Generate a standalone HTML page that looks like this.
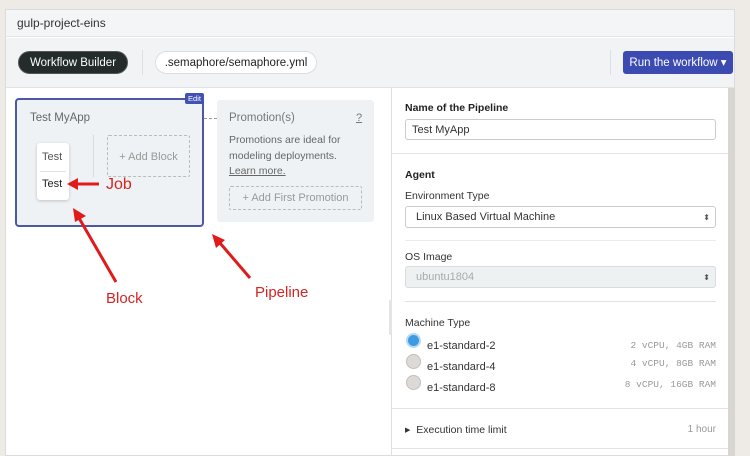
<!DOCTYPE html>
<html><head><style>
*{box-sizing:border-box;margin:0;padding:0}
body{width:750px;height:456px;background:#eeebe7;font-family:"Liberation Sans",sans-serif;position:relative;overflow:hidden;color:#333}
.a{position:absolute}
.t{position:absolute;white-space:nowrap}
</style></head><body>
<div class="a" style="left:5px;top:9px;width:730px;height:447px;background:#fff;border:1px solid #dcdcdc"></div>
<div class="a" style="left:6px;top:10px;width:728px;height:27px;background:#f3f5f6;border-bottom:1px solid #e2e5e7"></div>
<div class="t" style="left:17px;top:16px;font-size:12px;color:#333">gulp-project-eins</div>
<div class="a" style="left:6px;top:38px;width:728px;height:50px;background:#f1f3f4;border-bottom:1px solid #e0e3e5"></div>
<div class="a" style="left:18px;top:51px;width:110px;height:23px;background:#232b2d;border-radius:12px;border:1px solid #555;color:#fff;font-size:11.5px;text-align:center;line-height:22px">Workflow Builder</div>
<div class="a" style="left:142px;top:50px;width:1px;height:25px;background:#dde0e2"></div>
<div class="a" style="left:155px;top:51px;width:162px;height:23px;background:#fff;border-radius:12px;border:1px solid #dcdfe1;color:#222;font-size:11.5px;text-align:center;line-height:22px">.semaphore/semaphore.yml</div>
<div class="a" style="left:610px;top:50px;width:1px;height:25px;background:#dde0e2"></div>
<div class="a" style="left:623px;top:51px;width:110px;height:23px;background:#3c4bb2;border-radius:3px;color:#fff;font-size:11.5px;text-align:center;line-height:24px">Run the workflow ▾</div>

<div class="a" style="left:15px;top:98px;width:189px;height:129px;background:#eff2f4;border:2px solid #4c57a6;border-radius:4px"></div>
<div class="a" style="left:185px;top:93px;width:19px;height:11px;background:#4052b5;border-radius:2px;color:#fff;font-size:7.5px;text-align:center;line-height:11px">Edit</div>
<div class="t" style="left:30px;top:112px;font-size:11.5px;color:#666">Test MyApp</div>
<div class="a" style="left:37px;top:143px;width:32px;height:57px;background:#fff;border-radius:3px;box-shadow:0 1px 3px rgba(0,0,0,.2)"></div>
<div class="t" style="left:42px;top:151px;font-size:11px;color:#555">Test</div>
<div class="a" style="left:40px;top:171px;width:26px;height:1px;background:#e3e3e3"></div>
<div class="t" style="left:42px;top:178px;font-size:11px;color:#222">Test</div>
<div class="a" style="left:93px;top:135px;width:1px;height:42px;background:#d8dcdf"></div>
<div class="a" style="left:107px;top:135px;width:83px;height:42px;border:1px dashed #bbb;border-radius:2px;color:#999;font-size:11px;text-align:center;line-height:42px">+ Add Block</div>
<div class="a" style="left:204px;top:118px;width:13px;border-top:1px dashed #999"></div>
<div class="a" style="left:217px;top:100px;width:157px;height:122px;background:#eff2f4;border-radius:3px"></div>
<div class="t" style="left:229px;top:112px;font-size:11.5px;color:#777">Promotion(s)</div>
<div class="t" style="left:356px;top:112px;font-size:11px;color:#777;text-decoration:underline">?</div>
<div class="t" style="left:229px;top:133px;font-size:10.5px;color:#666;line-height:15.5px">Promotions are ideal for<br>modeling deployments.<br><u>Learn more.</u></div>
<div class="a" style="left:229px;top:186px;width:133px;height:24px;border:1px dashed #bbb;border-radius:2px;color:#999;font-size:11px;text-align:center;line-height:23px">+ Add First Promotion</div>

<svg class="a" style="left:0;top:0" width="390" height="456">
<g stroke="#e01b1b" stroke-width="3" fill="#e01b1b">
<line x1="99" y1="184" x2="74" y2="184"/><polygon points="67,184 78,178 78,190" stroke="none"/>
<line x1="116" y1="282" x2="79" y2="218"/><polygon points="73,208 86,216 75,222" stroke="none"/>
<line x1="250" y1="278" x2="220" y2="243"/><polygon points="212,234 225,240 216,248" stroke="none"/>
</g>
</svg>
<div class="t" style="left:106px;top:176px;font-size:16px;color:#d42424">Job</div>
<div class="t" style="left:106px;top:290px;font-size:15px;color:#d42424">Block</div>
<div class="t" style="left:255px;top:284px;font-size:15px;color:#d42424">Pipeline</div>

<div class="a" style="left:391px;top:88px;width:1px;height:368px;background:#e0e0e0"></div>
<div class="a" style="left:389px;top:300px;width:3px;height:35px;background:#e4e4e4;border-radius:2px"></div>
<div class="a" style="left:728px;top:88px;width:7px;height:368px;background:#d9d6d1"></div>
<div class="t" style="left:405px;top:102px;font-size:10.5px;font-weight:bold;color:#222">Name of the Pipeline</div>
<div class="a" style="left:405px;top:119px;width:311px;height:21px;border:1px solid #ccc;border-radius:3px;font-size:11px;line-height:20px;padding-left:6px;color:#333">Test MyApp</div>
<div class="a" style="left:392px;top:153px;width:336px;height:1px;background:#e3e3e3"></div>
<div class="t" style="left:405px;top:169px;font-size:10.5px;font-weight:bold;color:#222">Agent</div>
<div class="t" style="left:405px;top:190px;font-size:10.5px;color:#333">Environment Type</div>
<div class="a" style="left:405px;top:206px;width:311px;height:22px;border:1px solid #ccc;border-radius:3px;font-size:11px;line-height:21px;padding-left:10px;color:#333">Linux Based Virtual Machine<span style="position:absolute;right:5px;font-size:8px;color:#555">⬍</span></div>
<div class="a" style="left:405px;top:240px;width:311px;height:1px;background:#ececec"></div>
<div class="t" style="left:405px;top:251px;font-size:10.5px;color:#333">OS Image</div>
<div class="a" style="left:405px;top:266px;width:311px;height:22px;border:1px solid #d8dcde;border-radius:3px;background:#eef1f2;font-size:11px;line-height:21px;padding-left:10px;color:#aaa">ubuntu1804<span style="position:absolute;right:5px;font-size:8px;color:#555">⬍</span></div>
<div class="a" style="left:405px;top:301px;width:311px;height:1px;background:#e3e3e3"></div>
<div class="t" style="left:405px;top:317px;font-size:10.5px;color:#333">Machine Type</div>
<div class="a" style="left:406px;top:333px;width:15px;height:15px;border-radius:50%;background:#3d9be0;border:2px solid #b6d8f2"></div>
<div class="a" style="left:406px;top:354px;width:15px;height:15px;border-radius:50%;background:#ddd9d6;border:1px solid #c2beba"></div>
<div class="a" style="left:406px;top:375px;width:15px;height:15px;border-radius:50%;background:#ddd9d6;border:1px solid #c2beba"></div>
<div class="t" style="left:427px;top:340px;font-size:11px;color:#333">e1-standard-2</div>
<div class="t" style="left:427px;top:361px;font-size:11px;color:#333">e1-standard-4</div>
<div class="t" style="left:427px;top:382px;font-size:11px;color:#333">e1-standard-8</div>
<div class="t" style="right:34px;top:340px;font-size:9.5px;color:#999;font-family:'Liberation Mono',monospace">2 vCPU, 4GB RAM</div>
<div class="t" style="right:34px;top:358px;font-size:9.5px;color:#999;font-family:'Liberation Mono',monospace">4 vCPU, 8GB RAM</div>
<div class="t" style="right:34px;top:379px;font-size:9.5px;color:#999;font-family:'Liberation Mono',monospace">8 vCPU, 16GB RAM</div>
<div class="a" style="left:392px;top:408px;width:336px;height:1px;background:#e3e3e3"></div>
<div class="t" style="left:405px;top:424px;font-size:10.5px;color:#333"><span style="font-size:7px;vertical-align:1px">▶</span>&nbsp; Execution time limit</div>
<div class="t" style="right:34px;top:424px;font-size:10px;color:#999">1 hour</div>
<div class="a" style="left:392px;top:448px;width:336px;height:1px;background:#e3e3e3"></div>
</body></html>
